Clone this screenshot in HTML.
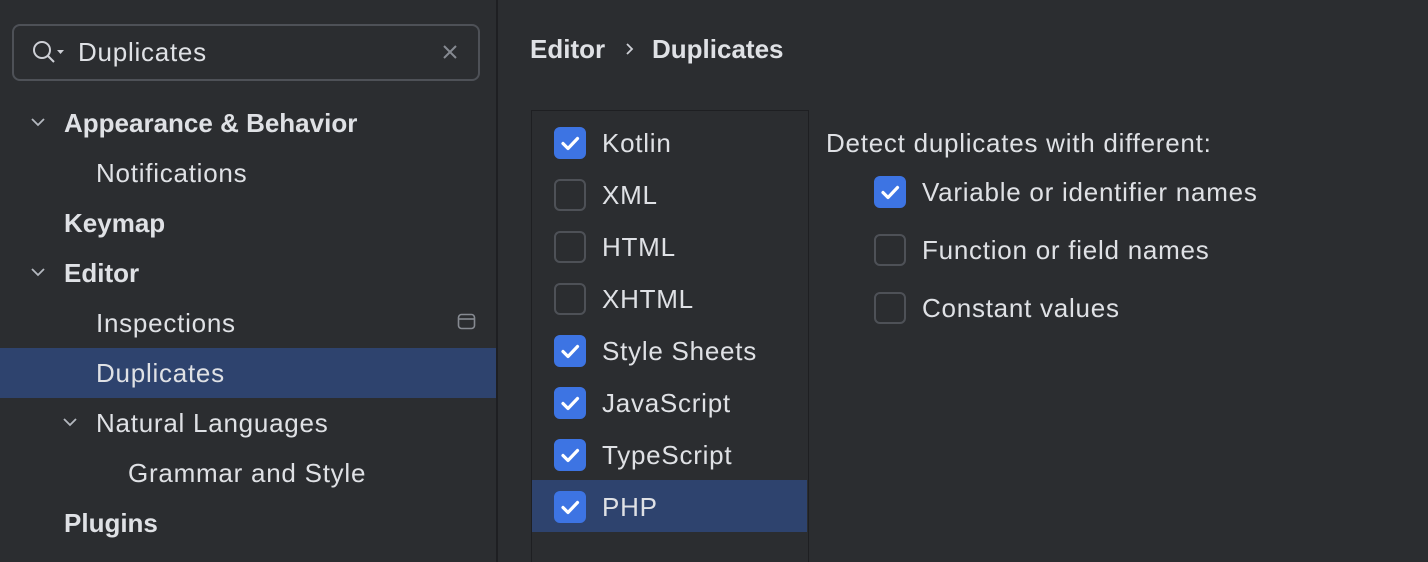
<!DOCTYPE html>
<html><head><style>
html,body{margin:0;width:1428px;height:562px;overflow:hidden}
body{background:#2b2d30;font-family:"Liberation Sans",sans-serif;color:#dfe1e5;position:relative}
.a{position:absolute;white-space:nowrap;font-size:26px;line-height:30px;letter-spacing:0.75px}
.b{font-weight:bold;letter-spacing:0}
.cb{position:absolute;width:28px;height:28px;border:2px solid #4e5157;border-radius:6px;box-sizing:content-box}
.cb.on{background:#3d74e3;border-color:#3d74e3}
.cb.on svg{position:absolute;left:2px;top:3px}
.chev{position:absolute}
</style></head><body>
<div style="position:absolute;left:496px;top:0;width:2px;height:562px;background:#1e1f22"></div>
<div style="position:absolute;left:12px;top:24px;width:464px;height:53px;border:2px solid #4e5157;border-radius:8px"></div>
<svg style="position:absolute;left:30px;top:38px" width="36" height="28" viewBox="0 0 36 28"><circle cx="12" cy="12" r="8" fill="none" stroke="#ced0d6" stroke-width="2"/><path d="M18 18l6 6" stroke="#ced0d6" stroke-width="2"/><path d="M27 12h7l-3.5 4z" fill="#ced0d6"/></svg>
<div class="a" style="left:78px;top:37px">Duplicates</div>
<svg style="position:absolute;left:442px;top:44px" width="16" height="16"><path d="M2 2L14 14M14 2L2 14" stroke="#868a91" stroke-width="2"/></svg>
<div style="position:absolute;left:0;top:348px;width:496px;height:50px;background:#2e436e"></div>
<svg class="chev" style="left:30px;top:116px" width="16" height="12"><path d="M2 3l6 6 6-6" fill="none" stroke="#b4b8bf" stroke-width="1.8"/></svg>
<svg class="chev" style="left:30px;top:266px" width="16" height="12"><path d="M2 3l6 6 6-6" fill="none" stroke="#b4b8bf" stroke-width="1.8"/></svg>
<svg class="chev" style="left:62px;top:416px" width="16" height="12"><path d="M2 3l6 6 6-6" fill="none" stroke="#b4b8bf" stroke-width="1.8"/></svg>
<div class="a b" style="left:64px;top:108px">Appearance &amp; Behavior</div>
<div class="a" style="left:96px;top:158px">Notifications</div>
<div class="a b" style="left:64px;top:208px">Keymap</div>
<div class="a b" style="left:64px;top:258px">Editor</div>
<div class="a" style="left:96px;top:308px">Inspections</div>
<svg style="position:absolute;left:457px;top:313px" width="20" height="18"><rect x="1.5" y="1.5" width="16" height="14" rx="3" fill="none" stroke="#868a91" stroke-width="1.6"/><path d="M2 6h15" stroke="#868a91" stroke-width="1.6"/></svg>
<div class="a" style="left:96px;top:358px">Duplicates</div>
<div class="a" style="left:96px;top:408px">Natural Languages</div>
<div class="a" style="left:128px;top:458px">Grammar and Style</div>
<div class="a b" style="left:64px;top:508px">Plugins</div>
<div class="a b" style="left:530px;top:34px">Editor</div>
<svg style="position:absolute;left:625px;top:42px" width="10" height="14"><path d="M2 2l5 5-5 5" fill="none" stroke="#ced0d6" stroke-width="1.8"/></svg>
<div class="a b" style="left:652px;top:34px">Duplicates</div>
<div style="position:absolute;left:531px;top:110px;width:276px;height:460px;border:1px solid #1e1f22"></div>
<div style="position:absolute;left:532px;top:480px;width:275px;height:52px;background:#2e436e"></div>
<div id="list"></div>
<div class="a" style="left:826px;top:128px">Detect duplicates with different:</div>
<script>
const ck='<svg width="24" height="22" viewBox="0 0 24 22"><path d="M5 11.5l5 5 9.5-10" fill="none" stroke="#fff" stroke-width="3.2" stroke-linecap="round" stroke-linejoin="round"/></svg>';
const items=[["Kotlin",1],["XML",0],["HTML",0],["XHTML",0],["Style Sheets",1],["JavaScript",1],["TypeScript",1],["PHP",1]];
let h='';
items.forEach((it,i)=>{const c=143+52*i;h+=`<div class="cb${it[1]?' on':''}" style="left:554px;top:${c-16}px">${it[1]?ck:''}</div><div class="a" style="left:602px;top:${c-15}px">${it[0]}</div>`});
[["Variable or identifier names",1,192],["Function or field names",0,250],["Constant values",0,308]].forEach(it=>{h+=`<div class="cb${it[1]?' on':''}" style="left:874px;top:${it[2]-16}px">${it[1]?ck:''}</div><div class="a" style="left:922px;top:${it[2]-15}px">${it[0]}</div>`});
document.getElementById('list').innerHTML=h;
</script>
</body></html>
